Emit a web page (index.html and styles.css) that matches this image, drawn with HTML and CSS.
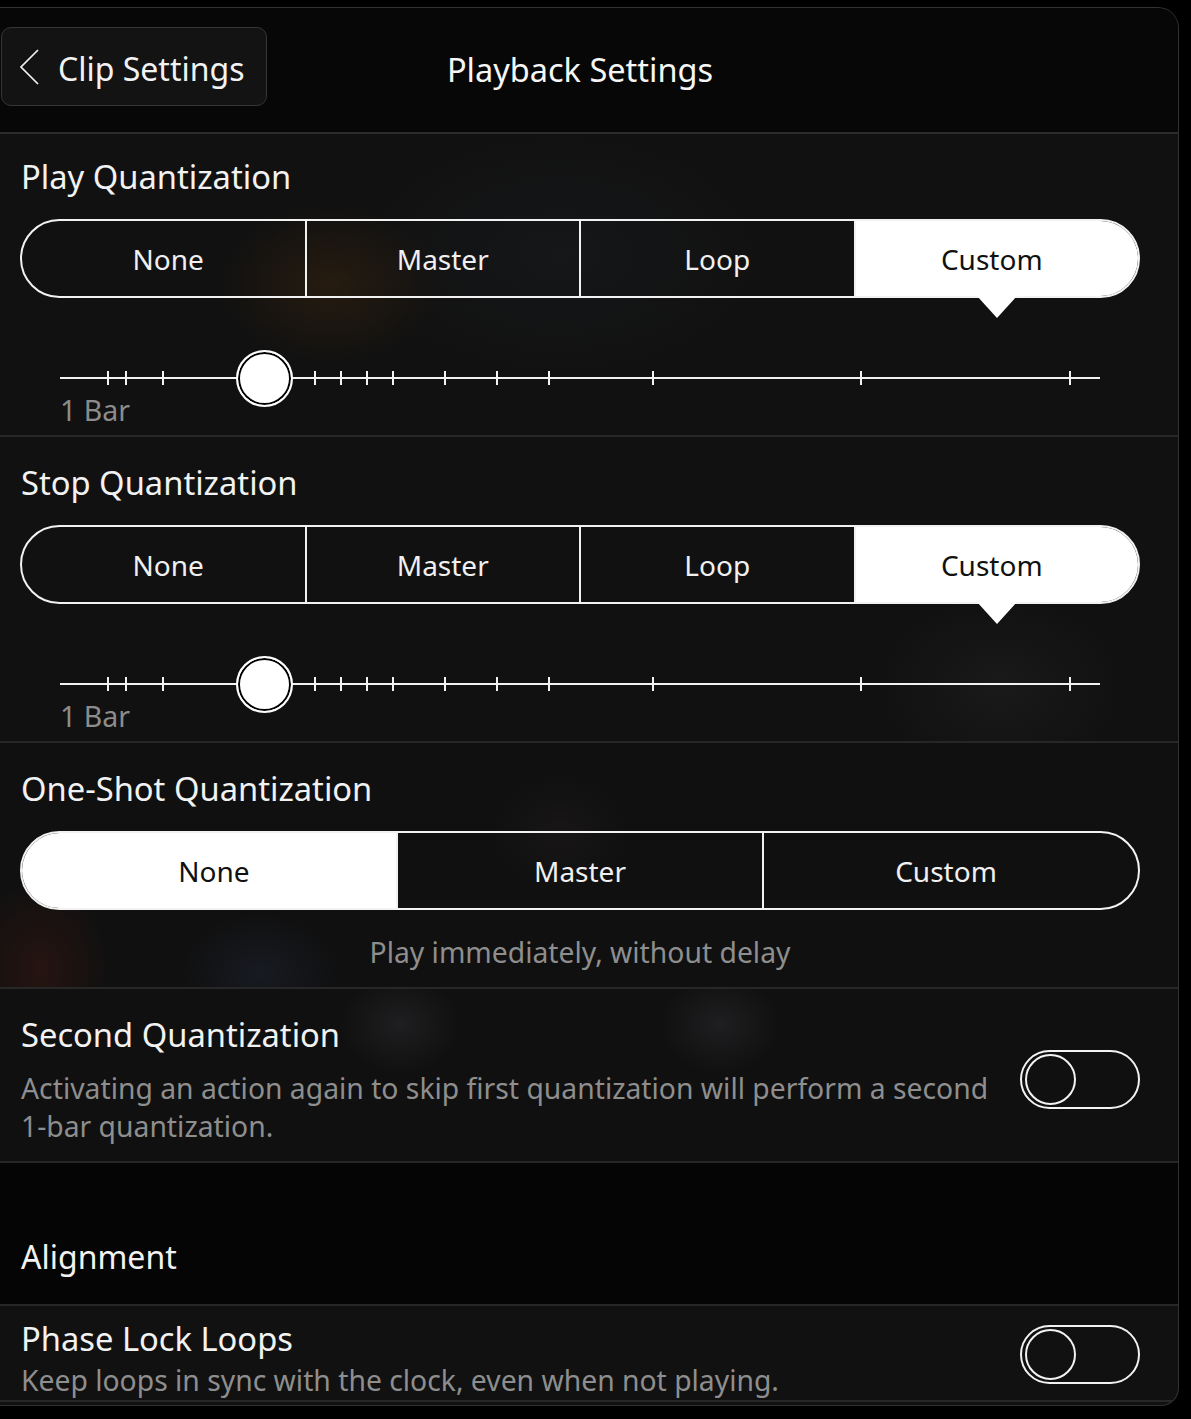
FILE: index.html
```html
<!DOCTYPE html>
<html lang="en">
<head>
<meta charset="utf-8">
<title>Playback Settings</title>
<link rel="stylesheet" href="styles.css">
</head>
<body>
<div class="panel">
  <header class="topbar">
    <div class="back">
      <svg class="back-chevron" width="20" height="36" viewBox="0 0 20 36" aria-hidden="true"><path d="M19 1 L2 18 L19 35" fill="none" stroke="#f2f2f2" stroke-width="1.7"/></svg>
      <span>Clip Settings</span>
    </div>
    <h1 class="topbar-title">Playback Settings</h1>
    <div></div>
  </header>

  <section class="group group-first glow-play">
    <h2 class="group-title">Play Quantization</h2>
    <div class="seg">
      <div class="seg-item">None</div>
      <div class="seg-item">Master</div>
      <div class="seg-item">Loop</div>
      <div class="seg-item is-active has-pointer">Custom</div>
    </div>
    <div class="slider">
      <div class="slider-line"></div>
      <span class="tick" style="left:48px"></span>
      <span class="tick" style="left:66px"></span>
      <span class="tick" style="left:103px"></span>
      <span class="tick" style="left:255px"></span>
      <span class="tick" style="left:281px"></span>
      <span class="tick" style="left:307px"></span>
      <span class="tick" style="left:333px"></span>
      <span class="tick" style="left:385px"></span>
      <span class="tick" style="left:437px"></span>
      <span class="tick" style="left:489px"></span>
      <span class="tick" style="left:593px"></span>
      <span class="tick" style="left:801px"></span>
      <span class="tick" style="left:1010px"></span>
      <span class="thumb" style="left:204px"></span>
    </div>
    <div class="slider-label">1 Bar</div>
  </section>

  <section class="group glow-stop">
    <h2 class="group-title">Stop Quantization</h2>
    <div class="seg">
      <div class="seg-item">None</div>
      <div class="seg-item">Master</div>
      <div class="seg-item">Loop</div>
      <div class="seg-item is-active has-pointer">Custom</div>
    </div>
    <div class="slider">
      <div class="slider-line"></div>
      <span class="tick" style="left:48px"></span>
      <span class="tick" style="left:66px"></span>
      <span class="tick" style="left:103px"></span>
      <span class="tick" style="left:255px"></span>
      <span class="tick" style="left:281px"></span>
      <span class="tick" style="left:307px"></span>
      <span class="tick" style="left:333px"></span>
      <span class="tick" style="left:385px"></span>
      <span class="tick" style="left:437px"></span>
      <span class="tick" style="left:489px"></span>
      <span class="tick" style="left:593px"></span>
      <span class="tick" style="left:801px"></span>
      <span class="tick" style="left:1010px"></span>
      <span class="thumb" style="left:204px"></span>
    </div>
    <div class="slider-label">1 Bar</div>
  </section>

  <section class="group group-oneshot glow-oneshot">
    <h2 class="group-title">One-Shot Quantization</h2>
    <div class="seg">
      <div class="seg-item is-active">None</div>
      <div class="seg-item">Master</div>
      <div class="seg-item">Custom</div>
    </div>
    <p class="group-note">Play immediately, without delay</p>
  </section>

  <section class="group group-row glow-second">
    <div class="row-text">
      <h2 class="group-title">Second Quantization</h2>
      <p class="row-desc">Activating an action again to skip first quantization will perform a second 1-bar quantization.</p>
    </div>
    <div class="toggle"><span class="toggle-knob"></span></div>
  </section>

  <section class="heading">
    <h2 class="group-title heading-title">Alignment</h2>
  </section>

  <section class="group group-row group-compact">
    <div class="row-text">
      <h2 class="group-title">Phase Lock Loops</h2>
      <p class="row-desc row-desc-tight">Keep loops in sync with the clock, even when not playing.</p>
    </div>
    <div class="toggle toggle-raised"><span class="toggle-knob"></span></div>
  </section>
</div>
</body>
</html>
```

FILE: styles.css
```css
* {
  box-sizing: border-box;
}

body {
  margin: 0;
  background: #000;
  color: #f2f2f2;
  font-family: "Noto Sans", "DejaVu Sans", sans-serif;
}

.panel {
  width: 1179px;
  margin-top: 7px;
  border: 1px solid #323232;
  border-left: 0;
  border-radius: 0 21px 18px 0;
  overflow: hidden;
  background: #111111;
  padding-bottom: 3px;
}

/* ---------- top bar ---------- */
.topbar {
  display: grid;
  grid-template-columns: 1fr auto 1fr;
  align-items: center;
  height: 126px;
  padding-right: 18px;
  background: #070707;
  border-bottom: 2px solid #2c2c2c;
}

.back {
  align-self: start;
  justify-self: start;
  display: flex;
  align-items: center;
  gap: 19px;
  width: 266px;
  height: 79px;
  margin: 19px 0 0 1px;
  padding-left: 17px;
  background: #131313;
  border: 1px solid #363636;
  border-radius: 10px;
  font-size: 32px;
  line-height: 44px;
  color: #f2f2f2;
}

.back span {
  position: relative;
  top: 2px;
}

.back-chevron {
  display: block;
  flex-shrink: 0;
}

.topbar-title {
  margin: 0;
  font-size: 32.5px;
  line-height: 44px;
  font-weight: 400;
  color: #f6f6f6;
}

/* ---------- groups ---------- */
.group {
  padding: 24px 38px 12px 20px;
  border-bottom: 2px solid #272727;
}

.group-first {
  padding-top: 21px;
}

.group-title {
  margin: 0;
  padding-left: 1px;
  font-size: 32.7px;
  line-height: 44px;
  font-weight: 400;
  color: #f2f2f2;
}

.glow-play {
  background:
    radial-gradient(ellipse 110px 80px at 330px 150px, rgba(64, 40, 14, 0.45), rgba(64, 40, 14, 0) 100%),
    radial-gradient(ellipse 200px 120px at 560px 120px, rgba(30, 34, 40, 0.35), rgba(30, 34, 40, 0) 100%),
    #111111;
}

.glow-stop {
  background:
    radial-gradient(ellipse 120px 90px at 1000px 250px, rgba(34, 34, 34, 0.5), rgba(34, 34, 34, 0) 100%),
    #111111;
}

.glow-oneshot {
  background:
    radial-gradient(ellipse 70px 90px at 40px 225px, rgba(60, 24, 18, 0.5), rgba(60, 24, 18, 0) 100%),
    radial-gradient(ellipse 80px 60px at 260px 230px, rgba(30, 36, 50, 0.5), rgba(30, 36, 50, 0) 100%),
    radial-gradient(ellipse 70px 60px at 560px 90px, rgba(36, 30, 34, 0.4), rgba(36, 30, 34, 0) 100%),
    #101010;
}

.glow-second {
  background:
    radial-gradient(ellipse 60px 50px at 400px 35px, rgba(40, 40, 44, 0.6), rgba(40, 40, 44, 0) 100%),
    radial-gradient(ellipse 60px 50px at 720px 35px, rgba(40, 40, 44, 0.6), rgba(40, 40, 44, 0) 100%),
    #101010;
}

/* ---------- segmented control ---------- */
.seg {
  display: flex;
  height: 79px;
  margin-top: 20px;
  border: 2px solid #f2f2f2;
  border-radius: 40px;
}

.seg-item {
  flex: 1 1 0;
  display: flex;
  align-items: center;
  justify-content: center;
  font-size: 28px;
  color: #f0f0f0;
  border-left: 2px solid #f2f2f2;
}

.seg-item:first-child {
  border-left: 0;
  padding-left: 10px;
  border-radius: 38px 0 0 38px;
}

.seg-item:last-child {
  padding-right: 10px;
  border-radius: 0 38px 38px 0;
}

.seg-item.is-active {
  background: #ffffff;
  color: #111111;
}

.has-pointer {
  position: relative;
}

.has-pointer::after {
  content: "";
  position: absolute;
  top: 100%;
  left: 50%;
  margin-left: -20px;
  border-left: 20px solid transparent;
  border-right: 20px solid transparent;
  border-top: 22px solid #ffffff;
}

/* ---------- slider ---------- */
.slider {
  position: relative;
  height: 40px;
  margin: 59px 40px 0;
  padding-top: 20px;
}

.slider-line {
  height: 2px;
  background: #f2f2f2;
}

.tick {
  position: absolute;
  top: 14px;
  width: 2px;
  height: 14px;
  margin-left: -1px;
  background: #f2f2f2;
}

.thumb {
  position: absolute;
  top: 21px;
  width: 57px;
  height: 57px;
  margin: -28px 0 0 -28px;
  border-radius: 50%;
  background: #ffffff;
  border: 2px solid #ffffff;
  box-shadow: inset 0 0 0 2px #000000;
}

.slider-label {
  margin: 0 40px;
  font-size: 28.5px;
  line-height: 26px;
  color: #8c8c8c;
}

/* ---------- one-shot ---------- */
.group-oneshot {
  padding-bottom: 16px;
}

.group-note {
  margin: 23px 0 0;
  font-size: 28.3px;
  line-height: 38px;
  text-align: center;
  color: #8e8e8e;
}

/* ---------- rows with toggle ---------- */
.group-row {
  display: flex;
  align-items: center;
  gap: 24px;
  padding-bottom: 16px;
}

.row-text {
  flex: 1 1 auto;
  min-width: 0;
}

.row-desc {
  margin: 12px 0 0;
  padding-left: 1px;
  font-size: 28.3px;
  line-height: 38px;
  color: #8e8e8e;
}

.row-desc-tight {
  margin-top: 0;
}

.group-compact {
  padding-top: 11px;
  padding-bottom: 1px;
}

.toggle {
  flex-shrink: 0;
  display: flex;
  align-items: center;
  width: 120px;
  height: 59px;
  padding: 0 3px;
  border: 2px solid #f2f2f2;
  border-radius: 30px;
}

.toggle-raised {
  margin-bottom: 7px;
}

.toggle-knob {
  width: 51px;
  height: 51px;
  border: 2px solid #f2f2f2;
  border-radius: 50%;
}

/* ---------- heading strip ---------- */
.heading {
  padding: 72px 38px 25px 20px;
  background: #050505;
  border-bottom: 2px solid #272727;
}

.heading-title {
  font-size: 32px;
}
```
